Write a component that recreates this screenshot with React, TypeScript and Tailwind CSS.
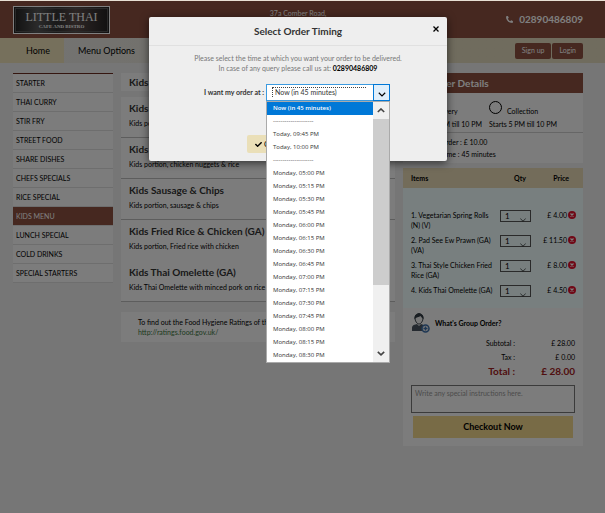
import { useState } from "react";
import { FaCheck, FaPhoneAlt } from "react-icons/fa";

const categories = [
  "STARTER",
  "THAI CURRY",
  "STIR FRY",
  "STREET FOOD",
  "SHARE DISHES",
  "CHEFS SPECIALS",
  "RICE SPECIAL",
  "KIDS MENU",
  "LUNCH SPECIAL",
  "COLD DRINKS",
  "SPECIAL STARTERS",
];

const dishes = [
  { name: "Kids Chicken & Chips", text: "Kids portion, chicken & chips" },
  { name: "Kids Nuggets & Rice", text: "Kids portion, chicken nuggets & rice" },
  { name: "Kids Sausage & Chips", text: "Kids portion, sausage & chips" },
  { name: "Kids Fried Rice & Chicken (GA)", text: "Kids portion, Fried rice with chicken" },
  { name: "Kids Thai Omelette (GA)", text: "Kids Thai Omelette with minced pork on rice" },
];

const basket = [
  { name: "1. Vegetarian Spring Rolls (N) (V)", price: "£ 4.00" },
  { name: "2. Pad See Ew Prawn (GA) (VA)", price: "£ 11.50" },
  { name: "3. Thai Style Chicken Fried Rice (GA)", price: "£ 8.00" },
  { name: "4. Kids Thai Omelette (GA)", price: "£ 4.50" },
];

const separator = "---------------------";

const times = [
  "Now (in 45 minutes)",
  separator,
  "Today, 09:45 PM",
  "Today, 10:00 PM",
  separator,
  "Monday, 05:00 PM",
  "Monday, 05:15 PM",
  "Monday, 05:30 PM",
  "Monday, 05:45 PM",
  "Monday, 06:00 PM",
  "Monday, 06:15 PM",
  "Monday, 06:30 PM",
  "Monday, 06:45 PM",
  "Monday, 07:00 PM",
  "Monday, 07:15 PM",
  "Monday, 07:30 PM",
  "Monday, 07:45 PM",
  "Monday, 08:00 PM",
  "Monday, 08:15 PM",
  "Monday, 08:30 PM",
];

function Chevron({ up = false, className = "" }: { up?: boolean; className?: string }) {
  return (
    <svg viewBox="0 0 10 6" className={className} fill="none" stroke="currentColor" aria-hidden="true">
      <path d={up ? "M1 5 5 1.2 9 5" : "M1 1 5 4.8 9 1"} />
    </svg>
  );
}

function Logo() {
  return (
    <div className="flex h-7 w-[97px] flex-col items-center justify-center border border-white bg-[linear-gradient(90deg,#222,#555_25%,#333_45%,#5a4a48_65%,#222)] font-['Liberation_Serif',serif] text-white outline-1 -outline-offset-3 outline-[#555]">
      <span className="pt-px text-[12px] leading-[13px]">LITTLE THAI</span>
      <span className="text-[5px] leading-[6px] font-bold">CAFE AND BISTRO</span>
    </div>
  );
}

function Header() {
  return (
    <header>
      <div className="flex h-[37px] items-center bg-[#8c5040] pr-[22px] pl-[13px]">
        <Logo />
        <address className="mx-auto self-start pt-[6px] pr-5 text-[7px] leading-3 text-white not-italic">
          37a Comber Road,
        </address>
        <a href="tel:02890486809" className="flex items-center gap-[6px] text-[10px] font-bold text-white">
          <FaPhoneAlt className="size-[7px]" />
          02890486809
        </a>
      </div>
      <nav className="flex h-[25px] items-center bg-linear-to-r from-[#e8e8e8] to-[#e0d8bc] to-75% pr-[22px] text-[9px]">
        <a href="#home" className="flex h-full items-center bg-[#ece0b8] pr-[14px] pl-[26px]">
          Home
        </a>
        <a href="#menu" className="pl-[14px]">
          Menu Options
        </a>
        <div className="ml-auto flex gap-px text-[7px] text-white">
          <button type="button" className="h-4 rounded-xs bg-[#8c5040] px-[7px]">
            Sign up
          </button>
          <button type="button" className="h-4 rounded-xs bg-[#8c5040] px-[7px]">
            Login
          </button>
        </div>
      </nav>
    </header>
  );
}

function Sidebar() {
  return (
    <ul className="w-[100px] shrink-0 self-start border-t border-[#6a2c20] bg-[#f8f8f8]">
      {categories.map((name) => (
        <li key={name} className="border-b border-[#ddd]">
          <a
            href="#category"
            className={
              name === "KIDS MENU"
                ? "block bg-[#8c5040] px-[3px] text-[7px] leading-[18px] text-white"
                : "block px-[3px] text-[7px] leading-[18px]"
            }
          >
            {name}
          </a>
        </li>
      ))}
    </ul>
  );
}

function Menu() {
  return (
    <main className="min-w-0 flex-1">
      <h1 className="bg-[#f8f8f8] px-2 text-[10px] leading-[18px] font-bold text-[#333]">Kids Menu</h1>
      <div className="mt-[6px] bg-[#f8f8f8]">
        {dishes.map((dish) => (
          <article
            key={dish.name}
            className="h-[41px] border-b border-[#bbb] px-2 pt-[3px] nth-4:border-transparent"
          >
            <h2 className="truncate text-[10px] leading-4 font-bold text-[#333]">{dish.name}</h2>
            <p className="truncate text-[7px] leading-[14px]">{dish.text}</p>
          </article>
        ))}
      </div>
      <p className="mt-[10px] bg-[#f8f8f8] px-[17px] py-[5px] text-[7px] leading-[10px] whitespace-nowrap">
        To find out the Food Hygiene Ratings of this
        <br />
        <a href="#ratings" className="text-[#3c763d]">
          http://ratings.food.gov.uk/
        </a>
      </p>
    </main>
  );
}

function GroupIcon() {
  return (
    <svg viewBox="0 0 19 20" className="h-5 w-[19px]" aria-hidden="true">
      <path d="M1 18v-3c0-3 3-3.500 5-4l2 2 2-2c2 .5 4 1.500 4 4v3z" fill="#4a5560" />
      <path d="M4 5c0-6 8-6 8 0 0 3-2 6-4 6S4 8 4 5z" fill="#eee" stroke="#333c44" />
      <path d="M3.500 6C2.500-1 13.500-1 12.500 6 11 5 10 4 9.500 3 8 4.500 5 4 3.500 6z" fill="#333c44" />
      <circle cx="14.500" cy="15.500" r="3.500" fill="#eee" stroke="#3c6ea8" strokeWidth="1.500" />
      <path d="M14.500 13.500v4M12.500 15.500h4" stroke="#3c6ea8" strokeWidth="1.300" />
    </svg>
  );
}

function Service({ name }: { name: string }) {
  return (
    <div className="w-[75px] shrink-0 whitespace-nowrap">
      <label className="flex items-end gap-[5px] leading-[10px]">
        <input
          type="radio"
          name="service"
          className="mb-[2px] size-[13px] appearance-none rounded-full border border-black bg-[#f8f8f8] checked:border-2"
        />
        {name}
      </label>
      <p className="leading-4">Starts 5 PM till 10 PM</p>
    </div>
  );
}

function Order() {
  return (
    <aside className="w-[180px] shrink-0 text-[7px]">
      <h2 className="bg-[#8c5040] pl-[26px] text-[10px] leading-5 font-bold text-white">Order Details</h2>
      <section className="bg-[#f8f8f8]">
        <div className="flex border-b border-[#ccc] pt-[8px] pl-[11px]">
          <Service name="Delivery" />
          <Service name="Collection" />
        </div>
        <div className="px-2 py-[3px] leading-3">
          <p>Minimum order : £ 10.00</p>
          <p className="pl-1">Delivery time : 45 minutes</p>
        </div>
      </section>
      <table className="mt-[5px] w-full table-fixed bg-[#f0ffff]">
        <colgroup>
          <col />
          <col className="w-[46px]" />
          <col className="w-[40px]" />
        </colgroup>
        <thead className="bg-[#e6d9b4] leading-5">
          <tr>
            <th className="pl-2 text-left">Items</th>
            <th>Qty</th>
            <th className="pr-[14px] text-right">Price</th>
          </tr>
          <tr className="h-[22px] bg-[#f0ffff]" />
        </thead>
        <tbody>
          {basket.map((item) => (
            <tr key={item.name} className="h-[25px] align-top leading-[10px] last:h-[23px]">
              <td className="pl-2">{item.name}</td>
              <td className="pl-[3px]">
                <span className="relative block w-[31px]">
                  <select
                    aria-label="Quantity"
                    className="block h-3 w-full appearance-none border border-[#555] bg-transparent px-1 text-[8px] leading-[10px]"
                  >
                    <option>1</option>
                  </select>
                  <Chevron className="pointer-events-none absolute right-1 bottom-0 h-1 w-2" />
                </span>
              </td>
              <td className="pr-[7px]">
                <span className="flex items-center justify-end gap-px whitespace-nowrap">
                  {item.price}
                  <button type="button" aria-label="Remove">
                    <svg viewBox="0 0 8 8" className="size-2">
                      <circle cx="4" cy="4" r="4" fill="#e0102c" />
                      <path d="m2.500 2.500 3 3m0-3-3 3" stroke="#fff" strokeWidth="1.200" />
                    </svg>
                  </button>
                </span>
              </td>
            </tr>
          ))}
        </tbody>
      </table>
      <section className="bg-[#f8f8f8] px-2 pt-[5px] pb-2">
        <a href="#group" className="flex items-center gap-[5px] font-bold">
          <GroupIcon />
          What's Group Order?
        </a>
        <dl className="grid grid-cols-[1fr_60px] pt-[3px] text-right leading-[14px]">
          <dt>Subtotal :</dt>
          <dd>£ 28.00</dd>
          <dt>Tax :</dt>
          <dd>£ 0.00</dd>
          <dt className="text-[10px] font-bold text-[#a02020]">Total :</dt>
          <dd className="text-[10px] font-bold text-[#a02020]">£ 28.00</dd>
        </dl>
        <textarea
          aria-label="Special instructions"
          placeholder="Write any special instructions here."
          className="mt-[7px] block h-7 w-full resize-none border border-[#777] bg-transparent px-[3px] py-[2px] placeholder:text-[#999]"
        />
        <button type="button" className="mt-[3px] ml-[2px] block h-[22px] w-40 bg-[#f0d68c] text-[9px] font-bold">
          Checkout Now
        </button>
      </section>
    </aside>
  );
}

function TimingModal() {
  const [time, setTime] = useState(times[0]);

  return (
    <div
      role="dialog"
      aria-labelledby="timing-title"
      className="absolute top-4 left-[149px] h-36 w-[298px] rounded-xs bg-[#eee] shadow-[0_2px_8px_rgba(0,0,0,0.6)]"
    >
      <div className="relative border-b border-[#e0e0e0]">
        <h2 id="timing-title" className="text-center text-[10px] leading-7 font-bold text-[#333]">
          Select Order Timing
        </h2>
        <button type="button" aria-label="Close" className="absolute top-[9px] right-2 text-black">
          <svg viewBox="0 0 6 6" className="size-[6px]" stroke="currentColor" strokeWidth="1.300">
            <path d="m.5.5 5 5m0-5-5 5" />
          </svg>
        </button>
      </div>
      <p className="pt-[7px] text-center text-[7px] leading-[10px] text-[#777]">
        Please select the time at which you want your order to be delivered.
        <br />
        In case of any query please call us at: <b className="text-black">02890486809</b>
      </p>
      <div className="mt-[11px] flex items-center pr-[57px] text-[7px]">
        <label htmlFor="timing" className="ml-auto pr-[2px] font-bold text-[#333]">
          I want my order at :
        </label>
        <div className="relative h-[17px] w-[124px]">
          <select
            id="timing"
            value={time}
            onChange={(e) => setTime(e.target.value)}
            className="h-full w-full appearance-none border border-[#3c9be0] bg-white pl-2 text-[#333]"
          >
            {times.filter((t) => t !== separator).map((t) => (
              <option key={t}>{t}</option>
            ))}
          </select>
          <span className="pointer-events-none absolute top-[3px] right-6 left-[6px] h-[10px] border-t border-l border-dotted border-[#444]" />
          <span className="pointer-events-none absolute inset-y-0 right-0 flex w-[17px] items-center justify-center border border-[#0078d7] bg-[#e0effb]">
            <Chevron className="mt-1 w-2 stroke-[1.5]" />
          </span>
          <div className="absolute top-[17px] left-0 flex w-full border border-[#aaa] bg-white font-['Open_Sans',sans-serif] text-[6px] leading-[13px]">
            <ul role="listbox" aria-label="Order time" className="flex-1 text-[#333]">
              {times.map((t, i) => (
                <li
                  key={i}
                  role="option"
                  aria-selected={t === time}
                  onClick={() => t !== separator && setTime(t)}
                  className={t === time ? "bg-[#0078d7] pl-[6px] font-semibold text-white" : "pl-[6px]"}
                >
                  {t}
                </li>
              ))}
            </ul>
            <div className="flex w-4 flex-col bg-[#f0f0f0] text-[#444]">
              <span className="flex h-[17px] items-center justify-center">
                <Chevron up className="w-2 stroke-2" />
              </span>
              <span className="h-[166px] bg-[#cdcdcd]" />
              <span className="mt-auto flex h-[17px] items-center justify-center">
                <Chevron className="w-2 stroke-2" />
              </span>
            </div>
          </div>
        </div>
      </div>
      <button
        type="button"
        className="mt-[34px] ml-[98px] flex h-[18px] items-center gap-[2px] rounded-xs bg-[#eadfb8] px-2 text-[8px] text-black"
      >
        <FaCheck className="size-[7px]" />
        Confirm
      </button>
    </div>
  );
}

export default function App() {
  return (
    <div className="relative min-h-screen border-t border-[#e8e0d4] bg-[#ececec] font-[Lato,sans-serif] text-black">
      <Header />
      <div className="flex gap-2 pt-[10px] pr-[22px] pl-[13px]">
        <Sidebar />
        <Menu />
        <Order />
      </div>
      <div className="absolute inset-0 bg-black/50" />
      <TimingModal />
    </div>
  );
}
